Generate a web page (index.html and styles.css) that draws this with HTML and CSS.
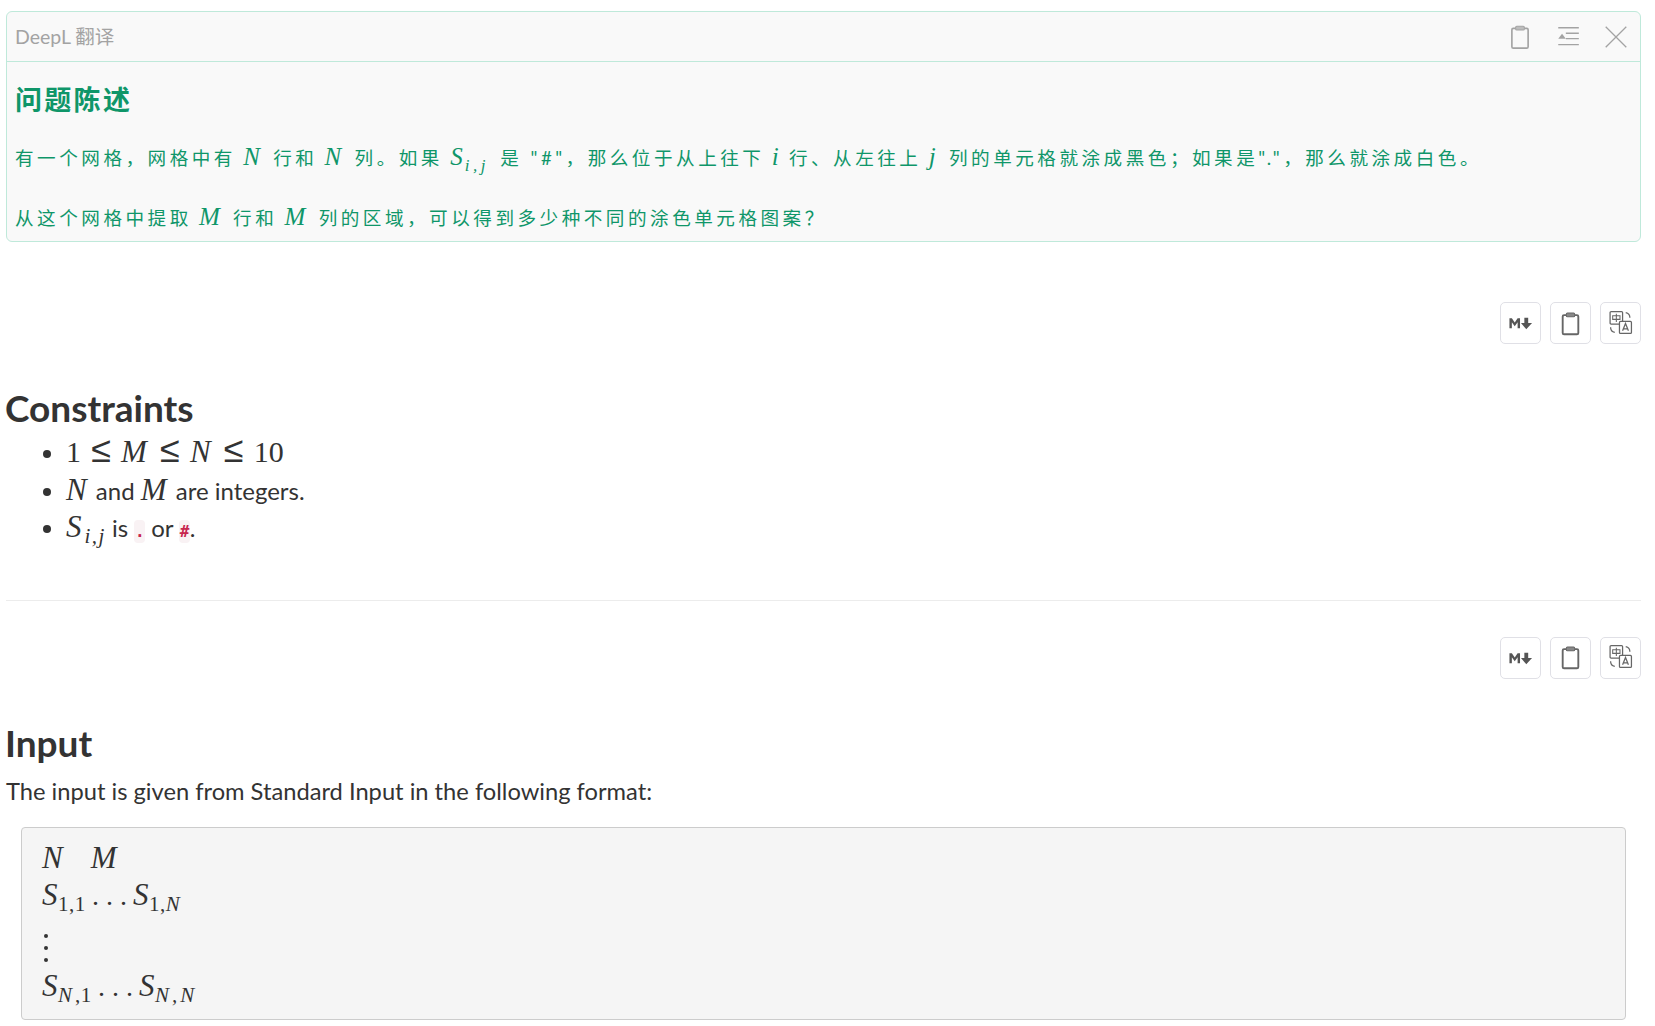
FILE: index.html
```html
<!DOCTYPE html>
<html lang="zh">
<head>
<meta charset="utf-8">
<title>DeepL 翻译</title>
<link rel="stylesheet" href="styles.css">
</head>
<body>
<main class="page">
  <section class="panel">
    <header class="panel-head">
      <span class="panel-title">DeepL 翻译</span>
      <div class="panel-tools">
        <svg class="ptool" viewBox="0 0 24 24"><path d="M8 4H5.800A1.300 1.300 0 0 0 4.500 5.300V21a1.300 1.300 0 0 0 1.300 1.300h12.400A1.300 1.300 0 0 0 19.500 21V5.300A1.300 1.300 0 0 0 18.200 4H16" fill="none" stroke="#a3a3a3" stroke-width="1.500"/><rect x="8" y="2" width="8" height="3.600" rx="1" fill="#bdbdbd" stroke="#a3a3a3" stroke-width="1"/></svg>
        <svg class="ptool" viewBox="0 0 24 24"><path d="M3 3.500h19M10 8.500h12M10 13.500h12M3 19h19" fill="none" stroke="#a3a3a3" stroke-width="1.300"/><path d="M3 13.500 6.500 9 10 13.500z" fill="#a3a3a3"/></svg>
        <svg class="ptool" viewBox="0 0 24 24"><path d="M2.500 2.500 21.500 21.500M21.500 2.500 2.500 21.500" fill="none" stroke="#a3a3a3" stroke-width="1.200"/></svg>
      </div>
    </header>
    <div class="panel-body">
      <h3 class="zh-title">问题陈述</h3>
      <p class="zh-text">有一个网格，网格中有 <i class="m">N</i> 行和 <i class="m">N</i> 列。如果 <i class="m">S<sub>i,j</sub></i> 是 "#"，那么位于从上往下 <i class="m tight">i</i> 行、从左往上 <i class="m">j</i> 列的单元格就涂成黑色；如果是"."，那么就涂成白色。</p>
      <p class="zh-text">从这个网格中提取 <i class="m">M</i> 行和 <i class="m">M</i> 列的区域，可以得到多少种不同的涂色单元格图案？</p>
    </div>
  </section>

  <div class="toolbar toolbar-first">
    <button class="tbtn"><svg class="ticon" viewBox="0 0 26 14"><path d="M1.500 12.500V2H4L7 6.500 10 2h2.500v10.500H10V6.300L7 10.500 4 6.300v6.200z" fill="#555"/><path d="M16 1.500h4V7h4l-6 6.500L12.500 7H16z" transform="translate(1 0)" fill="#555"/></svg></button>
    <button class="tbtn"><svg class="ticon-c" viewBox="0 0 24 24"><path d="M8 4H5.800A1.300 1.300 0 0 0 4.500 5.300V21a1.300 1.300 0 0 0 1.300 1.300h12.400a1.300 1.300 0 0 0 1.300-1.300V5.300A1.300 1.300 0 0 0 18.200 4H16" fill="none" stroke="#666" stroke-width="1.800"/><rect x="8" y="2" width="8" height="3.600" rx="1" fill="#888" stroke="#666"/></svg></button>
    <button class="tbtn"><svg class="ticon-c ticon-t" viewBox="0 0 24 24"><rect x="2" y="1.500" width="12" height="12" rx="1" fill="#fff" stroke="#666" stroke-width="1.200"/><path d="M8 3.500v8M4.500 5.500h7v3.500h-7z" fill="none" stroke="#666"/><rect x="11" y="11" width="11.500" height="11.500" rx="1" fill="#fff" stroke="#666" stroke-width="1.200"/><path d="M14 20l2.800-7 2.800 7M15 18h3.600" fill="none" stroke="#666" stroke-width="1.200"/><path d="M17 2.500a5 5 0 0 1 4 5M2.500 16.500a5 5 0 0 0 4 5" fill="none" stroke="#666" stroke-width="1.200"/></svg></button>
  </div>

  <h2 class="head head-first">Constraints</h2>
  <ul class="list">
    <li><span class="m-up">1</span> <span class="rel">≤</span> <i class="m">M</i> <span class="rel">≤</span> <i class="m">N</i> <span class="rel">≤</span> <span class="m-up">10</span></li>
    <li><i class="m">N</i> and <i class="m">M</i> are integers.</li>
    <li><i class="m">S<sub>i,j</sub></i> is <code class="tag">.</code> or <code class="tag">#</code>.</li>
  </ul>

  <hr class="rule">

  <div class="toolbar toolbar-second">
    <button class="tbtn"><svg class="ticon" viewBox="0 0 26 14"><path d="M1.500 12.500V2H4L7 6.500 10 2h2.500v10.500H10V6.300L7 10.500 4 6.300v6.200z" fill="#555"/><path d="M16 1.500h4V7h4l-6 6.500L12.500 7H16z" transform="translate(1 0)" fill="#555"/></svg></button>
    <button class="tbtn"><svg class="ticon-c" viewBox="0 0 24 24"><path d="M8 4H5.800A1.300 1.300 0 0 0 4.500 5.300V21a1.300 1.300 0 0 0 1.300 1.300h12.400a1.300 1.300 0 0 0 1.300-1.300V5.300A1.300 1.300 0 0 0 18.200 4H16" fill="none" stroke="#666" stroke-width="1.800"/><rect x="8" y="2" width="8" height="3.600" rx="1" fill="#888" stroke="#666"/></svg></button>
    <button class="tbtn"><svg class="ticon-c ticon-t" viewBox="0 0 24 24"><rect x="2" y="1.500" width="12" height="12" rx="1" fill="#fff" stroke="#666" stroke-width="1.200"/><path d="M8 3.500v8M4.500 5.500h7v3.500h-7z" fill="none" stroke="#666"/><rect x="11" y="11" width="11.500" height="11.500" rx="1" fill="#fff" stroke="#666" stroke-width="1.200"/><path d="M14 20l2.800-7 2.800 7M15 18h3.600" fill="none" stroke="#666" stroke-width="1.200"/><path d="M17 2.500a5 5 0 0 1 4 5M2.500 16.500a5 5 0 0 0 4 5" fill="none" stroke="#666" stroke-width="1.200"/></svg></button>
  </div>

  <h2 class="head head-second">Input</h2>
  <p class="para">The input is given from Standard Input in the following format:</p>
  <div class="pre">
    <div class="pre-row pre-row-first"><i class="m">N</i><i class="m gap">M</i></div>
    <div class="pre-row"><i class="m">S<sub class="up">1,1</sub></i> <span class="dots">. . .</span> <i class="m">S<sub><span class="up">1,</span>N</sub></i></div>
    <div class="pre-vdots"><span></span><span></span><span></span></div>
    <div class="pre-row"><i class="m">S<sub class="wide">N<span class="up">,1</span></sub></i> <span class="dots">. . .</span> <i class="m">S<sub class="wide">N,N</sub></i></div>
  </div>
</main>
</body>
</html>
```

FILE: styles.css
```css
* { box-sizing: border-box; }
html, body { margin: 0; padding: 0; background: #fff; overflow: hidden; }
body { font-family: Lato, "Noto Sans CJK SC", sans-serif; color: #333; font-size: 24px; height: 1026px; }
.page { padding: 11px 14px 0 6px; }

.panel { border: 1px solid #bfe9da; border-radius: 6px; background: #f9f9f9; height: 231px; }
.panel-head { height: 50px; border-bottom: 1px solid #bfe9da; display: flex; align-items: center; justify-content: space-between; padding: 0 11px 0 8px; }
.panel-title { font-size: 19.500px; color: #a3a3a3; padding-bottom: 2px; }
.panel-tools { display: flex; gap: 22px; align-items: center; }
.ptool { width: 26px; height: 26px; display: block; }
.panel-body { padding: 0 8px; color: #0f9669; }
.zh-title { margin: 0; padding-top: 18px; font-size: 27px; line-height: 40px; font-weight: 700; letter-spacing: 2.300px; color: #0f9669; }
.zh-text { margin: 0; font-size: 18.600px; letter-spacing: 3.500px; line-height: 30px; padding-top: 23px; white-space: nowrap; }
.zh-text + .zh-text { padding-top: 30px; }
.zh-text .m { font-size: 25px; letter-spacing: 2px; margin: 0 3px 0 -1px; }
.zh-text .tight { margin-right: 0; }
.zh-text sub { font-size: 17px; letter-spacing: 3.500px; }

.m { font-family: "Liberation Serif", serif; font-style: italic; font-size: 31px; line-height: 1; letter-spacing: 3px; }
.m-up { font-family: "Liberation Serif", serif; font-size: 30px; line-height: 1; }
.rel { font-family: "DejaVu Sans", sans-serif; font-weight: 200; font-size: 36px; line-height: 0; margin: 0 4px; }
sub { font-size: 21px; line-height: 0; vertical-align: -6px; letter-spacing: 1.500px; }
.up { font-style: normal; letter-spacing: 0.500px; }

.toolbar { display: flex; justify-content: flex-end; gap: 9px; }
.toolbar-first { margin-top: 60px; }
.toolbar-second { margin-top: 36px; }
.tbtn { width: 41px; height: 42px; padding: 0; border: 1px solid #e0e0e6; border-radius: 5px; background: #fff; display: flex; align-items: center; justify-content: center; }
.ticon { width: 25px; height: 14px; display: block; }
.ticon-c { width: 25px; height: 25px; display: block; }
.ticon-t { margin-bottom: 2px; }

.head { margin: 0 0 0 -1px; font-size: 37px; font-weight: 700; line-height: 44px; color: #333; }
.head-first { margin-top: 42px; }
.head-second { margin-top: 42px; }

.list { margin: 4px 0 0; padding: 0 0 0 60px; }
.list li { line-height: 37.500px; height: 37.500px; white-space: nowrap; }
.tag { font-family: "DejaVu Sans Mono", monospace; font-size: 16px; color: #c7254e; background: #f9f2f4; padding: 2px 0.500px; border-radius: 4px; font-weight: 700; }

.rule { border: 0; border-top: 1px solid #ececec; margin: 53px 0 0; }

.para { margin: 8px 0 0; line-height: 36px; font-size: 23.700px; }
.pre { margin: 18px 0 0 15px; height: 193px; width: 1605px; border: 1px solid #ccc; border-radius: 4px; background: #f5f5f5; padding: 13px 20px 0; }
.pre-row { height: 39px; line-height: 39px; white-space: nowrap; }
.pre-row-first { height: 35px; line-height: 35px; }
.gap { margin-left: 25px; }
.dots { font-family: "Liberation Serif", serif; font-size: 28px; letter-spacing: 0; }
.pre sub { font-size: 21px; margin-left: -2.500px; }
.pre sub.wide { letter-spacing: 3px; }
.pre-vdots { height: 52px; display: flex; flex-direction: column; justify-content: center; gap: 8px; padding-left: 2px; padding-top: 15px; }
.pre-vdots span { width: 4px; height: 4px; border-radius: 50%; background: #333; display: block; }
```
